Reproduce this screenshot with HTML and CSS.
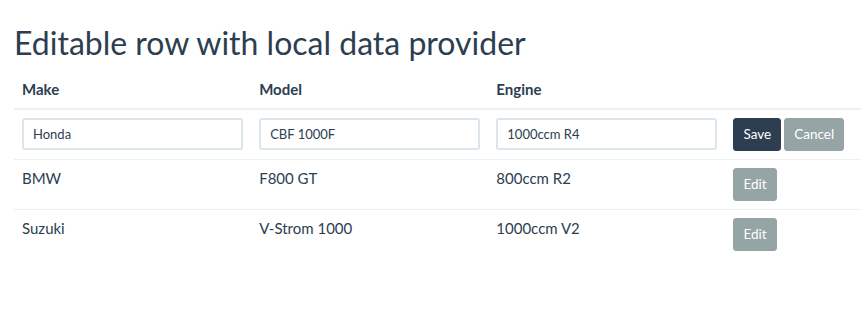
FILE: index.html
```html
<!DOCTYPE html>
<html lang="en">
<head>
    <meta charset="UTF-8">
    <title>Editable row with local data provider</title>
    <link rel="stylesheet" href="styles.css">
</head>
<body>
    <div class="container">
        <h2>Editable row with local data provider</h2>

        <table class="table">
            <thead>
                <tr>
                    <th class="col">Make</th>
                    <th class="col">Model</th>
                    <th class="col">Engine</th>
                    <th class="col-actions"></th>
                </tr>
            </thead>
            <tbody>
                <tr>
                    <td><input class="form-control" type="text" value="Honda"></td>
                    <td><input class="form-control" type="text" value="CBF 1000F"></td>
                    <td><input class="form-control" type="text" value="1000ccm R4"></td>
                    <td>
                        <button class="btn btn-primary">Save</button><button class="btn btn-default">Cancel</button>
                    </td>
                </tr>
                <tr>
                    <td>BMW</td>
                    <td>F800 GT</td>
                    <td>800ccm R2</td>
                    <td><button class="btn btn-default">Edit</button></td>
                </tr>
                <tr>
                    <td>Suzuki</td>
                    <td>V-Strom 1000</td>
                    <td>1000ccm V2</td>
                    <td><button class="btn btn-default">Edit</button></td>
                </tr>
            </tbody>
        </table>
    </div>
</body>
</html>
```

FILE: styles.css
```css
body {
    font-family: Lato, "Helvetica Neue", Helvetica, Arial, sans-serif;
    font-size: 15px;
    line-height: 1.42857;
    color: #2c3e50;
    background: #ffffff;
    margin: 0;
}

.container {
    padding: 4px 7px 0 14px;
}

h2 {
    font-size: 32px;
    font-weight: 400;
    line-height: 1.1;
    margin: 21px 0 10.5px 0;
}

.table {
    width: 100%;
    border-collapse: collapse;
    border-spacing: 0;
}

.table th,
.table td {
    padding: 8px;
    text-align: left;
    vertical-align: top;
    line-height: 1.42857;
    border-top: 1px solid #ecf0f1;
}

.table thead th {
    border-top: 0;
    border-bottom: 2px solid #ecf0f1;
    font-weight: 700;
    vertical-align: bottom;
}

.table tbody tr:first-child td {
    border-top: 0;
}

.col {
    width: 28%;
}

.col-actions {
    width: 16%;
}

.form-control {
    display: block;
    width: 100%;
    box-sizing: border-box;
    height: 32px;
    padding: 5px 9px;
    font-family: inherit;
    font-size: 13px;
    color: #2c3e50;
    background: #ffffff;
    border: 2px solid #dce4ec;
    border-radius: 3px;
    outline: none;
}

.btn {
    display: inline-block;
    height: 33px;
    padding: 0 9px;
    font-family: inherit;
    font-size: 13.5px;
    line-height: 31px;
    color: #ffffff;
    border: 1px solid transparent;
    border-radius: 3px;
    cursor: pointer;
    vertical-align: middle;
}

.btn + .btn {
    margin-left: 3px;
}

.btn-primary {
    background: #2c3e50;
    border-color: #2c3e50;
}

.btn-default {
    background: #95a5a6;
    border-color: #95a5a6;
}
```
